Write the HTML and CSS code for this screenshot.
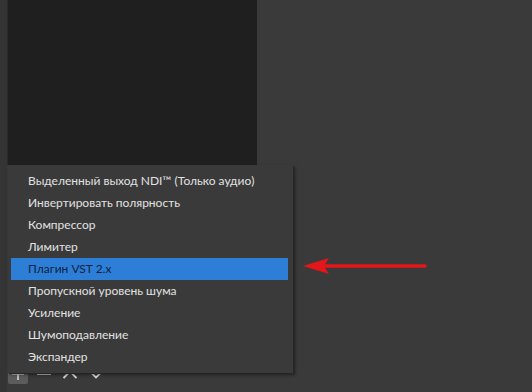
FILE: index.html
```html
<!DOCTYPE html>
<html>
<head>
	<title>Фильтры</title>
	<link rel="stylesheet" href="styles.css">
</head>
<body>
	<div class="window">
		<div class="side">
			<div class="preview"></div>
			<div class="toolbar">
				<span class="tool tool-add">
					<svg width="14" height="14" viewBox="0 0 14 14"><path d="M7 1v12M1 7h12" stroke="#d8d8d8" stroke-width="1.6"/></svg>
				</span>
				<span class="tool">
					<svg width="16" height="14" viewBox="0 0 16 14"><path d="M1 7h14" stroke="#d8d8d8" stroke-width="1.6"/></svg>
				</span>
				<span class="tool">
					<svg width="16" height="14" viewBox="0 0 16 14"><path d="M1.5 11L8 4.5 14.5 11" fill="none" stroke="#d8d8d8" stroke-width="1.8"/></svg>
				</span>
				<span class="tool">
					<svg width="16" height="14" viewBox="0 0 16 14"><path d="M1.5 4L8 10.5 14.5 4" fill="none" stroke="#d8d8d8" stroke-width="1.8"/></svg>
				</span>
			</div>
		</div>

		<ul class="menu">
			<li>Выделенный выход NDI™ (Только аудио)</li>
			<li>Инвертировать полярность</li>
			<li>Компрессор</li>
			<li>Лимитер</li>
			<li class="selected">Плагин VST 2.x</li>
			<li>Пропускной уровень шума</li>
			<li>Усиление</li>
			<li>Шумоподавление</li>
			<li>Экспандер</li>
		</ul>

		<svg class="pointer" width="130" height="20" viewBox="0 0 130 20">
			<path d="M20 10H124" stroke="#e3161a" stroke-width="3.5" stroke-linecap="round"/>
			<path d="M2 10L28 2 23 10 28 18Z" fill="#e3161a"/>
		</svg>
	</div>
</body>
</html>
```

FILE: styles.css
```css
body {
	margin: 0;
	padding: 0;
	background-color: #3a3a3a;
	font-family: Lato, "Noto Sans", sans-serif;
}

.window {
	position: relative;
	width: 532px;
	height: 392px;
	overflow: hidden;
	background-color: #3a3a3a;
}

.side {
	display: flex;
	flex-direction: column;
	width: 257px;
	height: 392px;
	padding-left: 7px;
	box-sizing: border-box;
	background-color: #3a3a3a;
	box-shadow: inset 7px 0 0 #343434;
}

.preview {
	height: 165px;
	background-color: #1f1f1f;
	border-left: 1px solid #2a2a2a;
}

.toolbar {
	display: flex;
	align-items: center;
	gap: 6px;
	margin-top: 198px;
	padding-left: 1px;
}

.tool {
	display: flex;
	align-items: center;
	justify-content: center;
	width: 20px;
	height: 21px;
}

.tool-add {
	background-color: #5c5c5c;
	border-radius: 2px;
}

.menu {
	position: absolute;
	left: 8px;
	top: 165px;
	width: 285px;
	margin: 0;
	padding: 5px 5px 5px 3px;
	box-sizing: border-box;
	list-style: none;
	background-color: #3a3a3a;
	box-shadow: 1px 1px 0 #252525, 2px 2px 3px rgba(0, 0, 0, 0.45);
}

.menu li {
	height: 22px;
	line-height: 22px;
	padding-left: 17px;
	font-size: 12px;
	color: #e2e2e2;
	white-space: nowrap;
}

.menu li.selected {
	background-color: #2d7ed6;
	color: #0e1f3f;
}

.pointer {
	position: absolute;
	left: 301px;
	top: 256px;
}
```
